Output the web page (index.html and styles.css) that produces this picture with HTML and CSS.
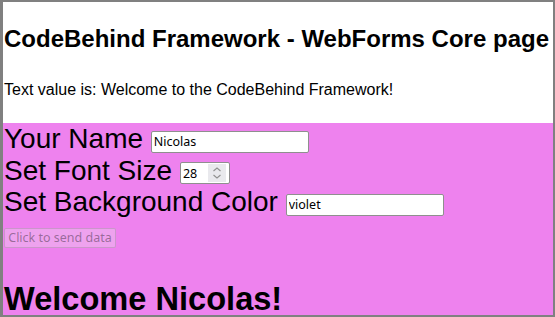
FILE: index.html
```html
<!DOCTYPE html>
<html>
<head>
<meta charset="utf-8">
<link rel="stylesheet" href="styles.css">
</head>
<body>
<div class="frame">
  <h1 class="title">CodeBehind Framework - WebForms Core page</h1>
  <p class="value">Text value is: Welcome to the CodeBehind Framework!</p>
  <form class="panel">
    <div class="row">Your Name <input class="field name" type="text" value="Nicolas"></div>
    <div class="row">Set Font Size <span class="numwrap"><input class="field num" type="number" value="28"><span class="spin"><svg width="18" height="18" viewBox="0 0 18 18"><path d="M5.5 7 L9 4 L12.5 7 M5.5 11 L9 14 L12.5 11" fill="none" stroke="#909090" stroke-width="1.1"/></svg></span></span></div>
    <div class="row">Set Background Color <input class="field color" type="text" value="violet"></div>
    <button class="send" type="button" disabled>Click to send data</button>
    <h1 class="welcome">Welcome Nicolas!</h1>
  </form>
</div>
</body>
</html>
```
FILE: styles.css
```css
html, body {
  margin: 0;
  padding: 0;
}
body {
  font-family: "Liberation Sans", Arial, sans-serif;
  background: #fff;
  color: #000;
}
.frame {
  box-sizing: border-box;
  width: 555px;
  height: 317px;
  border-style: solid;
  border-color: #808080;
  border-width: 2px 2px 2px 3px;
  overflow: hidden;
  display: flex;
  flex-direction: column;
}
.title {
  font-size: 24px;
  font-weight: bold;
  margin: 23px 0 0 1px;
  line-height: 28px;
  white-space: nowrap;
}
.value {
  font-size: 16px;
  margin: 28px 0 0 1px;
  line-height: 18px;
}
.panel {
  flex: 1;
  margin-top: 24px;
  background: #ee82ee;
  font-size: 28px;
  padding-left: 1px;
}
.row {
  line-height: 31.5px;
  height: 31.5px;
}
.field {
  font-family: "Noto Sans", "Open Sans", sans-serif;
  font-size: 12.5px;
  color: #000;
  box-sizing: border-box;
  height: 22px;
  border: 1px solid #8f8f8f;
  border-radius: 2px;
  padding: 0 2px;
  vertical-align: 2px;
  background: #fff;
}
.name, .color { width: 158px; }
.numwrap {
  position: relative;
  display: inline-flex;
  vertical-align: 2px;
  line-height: normal;
}
.num {
  width: 50px;
  padding-right: 24px;
  -moz-appearance: textfield;
}
.num::-webkit-inner-spin-button,
.num::-webkit-outer-spin-button {
  -webkit-appearance: none;
  margin: 0;
}
.spin {
  position: absolute;
  right: 4px;
  top: 2px;
  width: 18px;
  height: 18px;
  background: #e9e9ed;
}
.spin svg { display: block; }
.send {
  margin-top: 10px;
  font-family: "Noto Sans", "Open Sans", sans-serif;
  font-size: 12.5px;
  height: 20px;
  width: 112px;
  padding: 0;
  background: rgba(239,239,239,0.3);
  color: rgba(16,16,16,0.4);
  border: 1px solid rgba(118,118,118,0.3);
  border-radius: 2px;
  display: block;
}
.welcome {
  font-size: 32.6px;
  margin: 32px 0 0;
  line-height: 38px;
}
```
